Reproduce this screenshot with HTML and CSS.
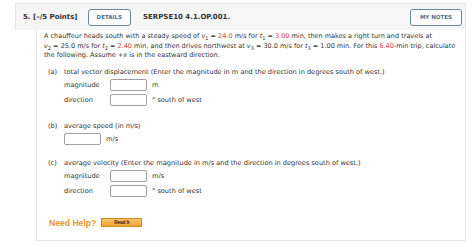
FILE: index.html
```html
<!DOCTYPE html>
<html lang="en">
<head>
    <meta charset="UTF-8">
    <title>Question 5</title>
    <link rel="stylesheet" href="styles.css">
</head>
<body>

    <div class="question">
        <div class="q-header">
            <span class="q-points">5. [&ndash;/5 Points]</span>
            <button class="outline-btn">DETAILS</button>
            <span class="q-code">SERPSE10 4.1.OP.001.</span>
            <button class="outline-btn notes">MY NOTES</button>
        </div>

        <div class="q-body">
            <p class="prompt">
                A chauffeur heads south with a steady speed of <i>v</i><sub>1</sub> = <span class="val">24.0</span> m/s for <i>t</i><sub>1</sub> = <span class="val">3.00</span> min, then makes a right turn and travels at<br>
                <i>v</i><sub>2</sub> = 25.0 m/s for <i>t</i><sub>2</sub> = <span class="val">2.40</span> min, and then drives northwest at <i>v</i><sub>3</sub> = 30.0 m/s for <i>t</i><sub>3</sub> = 1.00 min. For this <span class="val">6.40</span>-min trip, calculate<br>
                the following. Assume +<i>x</i> is in the eastward direction.
            </p>

            <div class="part part-a">
                <div class="part-title"><span class="part-label">(a)</span>total vector displacement (Enter the magnitude in m and the direction in degrees south of west.)</div>
                <div class="answer-row">
                    <span class="row-label">magnitude</span>
                    <span class="blank"></span>
                    <span class="unit">m</span>
                </div>
                <div class="answer-row">
                    <span class="row-label">direction</span>
                    <span class="blank"></span>
                    <span class="unit">&deg; south of west</span>
                </div>
            </div>

            <div class="part part-b">
                <div class="part-title"><span class="part-label">(b)</span>average speed (in m/s)</div>
                <div class="answer-row">
                    <span class="blank"></span>
                    <span class="unit">m/s</span>
                </div>
            </div>

            <div class="part part-c">
                <div class="part-title"><span class="part-label">(c)</span>average velocity (Enter the magnitude in m/s and the direction in degrees south of west.)</div>
                <div class="answer-row">
                    <span class="row-label">magnitude</span>
                    <span class="blank"></span>
                    <span class="unit">m/s</span>
                </div>
                <div class="answer-row">
                    <span class="row-label">direction</span>
                    <span class="blank"></span>
                    <span class="unit">&deg; south of west</span>
                </div>
            </div>

            <div class="help">
                <span class="help-title">Need Help?</span>
                <button class="read-it">Read It</button>
            </div>
        </div>
    </div>

</body>
</html>
```

FILE: styles.css
```css
body {
    font-family: "DejaVu Sans", Verdana, sans-serif;
    margin: 0;
    background-color: #ffffff;
    color: #333;
}

.question {
    margin: 3px 8px 0 15px;
}

.q-header {
    display: flex;
    align-items: center;
    height: 26px;
    padding: 0 3px 0 7px;
    background-color: #f6f6f6;
    border: 1px solid #e6e6e6;
    border-bottom: none;
}

.q-points {
    font-size: 7px;
    font-weight: bold;
    margin-right: 10px;
}

.outline-btn {
    height: 17px;
    padding: 0 8px;
    background-color: #fff;
    border: 1px solid #6a8798;
    border-radius: 3px;
    color: #4d6f86;
    font-family: inherit;
    font-size: 5.5px;
    font-weight: bold;
}

.q-code {
    font-size: 7px;
    font-weight: bold;
    margin-left: 12px;
}

.outline-btn.notes {
    margin-left: auto;
    padding: 0 9px;
}

.q-body {
    margin-left: 21px;
    padding: 2px 7px 12px 7px;
    background-color: #fff;
    border: 1px solid #e6e6e6;
    border-top: none;
    font-size: 6.6px;
}

.prompt {
    margin: 0;
    font-size: 6.5px;
    line-height: 9.5px;
    white-space: nowrap;
}

.prompt sub {
    font-size: 5px;
    line-height: 0;
}

.val {
    color: #e0403a;
}

.part {
    padding-left: 4px;
}

.part-a {
    margin-top: 5px;
}

.part-b {
    margin-top: 12px;
}

.part-c {
    margin-top: 10px;
}

.part-title {
    line-height: 12px;
}

.part-label {
    display: inline-block;
    width: 16px;
}

.answer-row {
    display: flex;
    align-items: center;
    height: 15px;
    padding-left: 16px;
}

.row-label {
    width: 46px;
}

.blank {
    width: 35px;
    height: 10px;
    border: 1px solid #a0a0a0;
    border-radius: 2px;
    margin-right: 5px;
}

.help {
    display: flex;
    align-items: center;
    margin-top: 19px;
    padding-left: 5px;
}

.help-title {
    color: #e8942f;
    font-size: 8.6px;
    font-weight: bold;
    font-family: "Liberation Sans", Arial, sans-serif;
    margin-right: 5px;
}

.read-it {
    width: 41px;
    height: 9px;
    padding: 0;
    border: 1px solid #c98a20;
    background: linear-gradient(#fbc869, #eea230);
    color: #222;
    font-family: "Liberation Sans", Arial, sans-serif;
    font-size: 4.5px;
    font-weight: bold;
}
```
